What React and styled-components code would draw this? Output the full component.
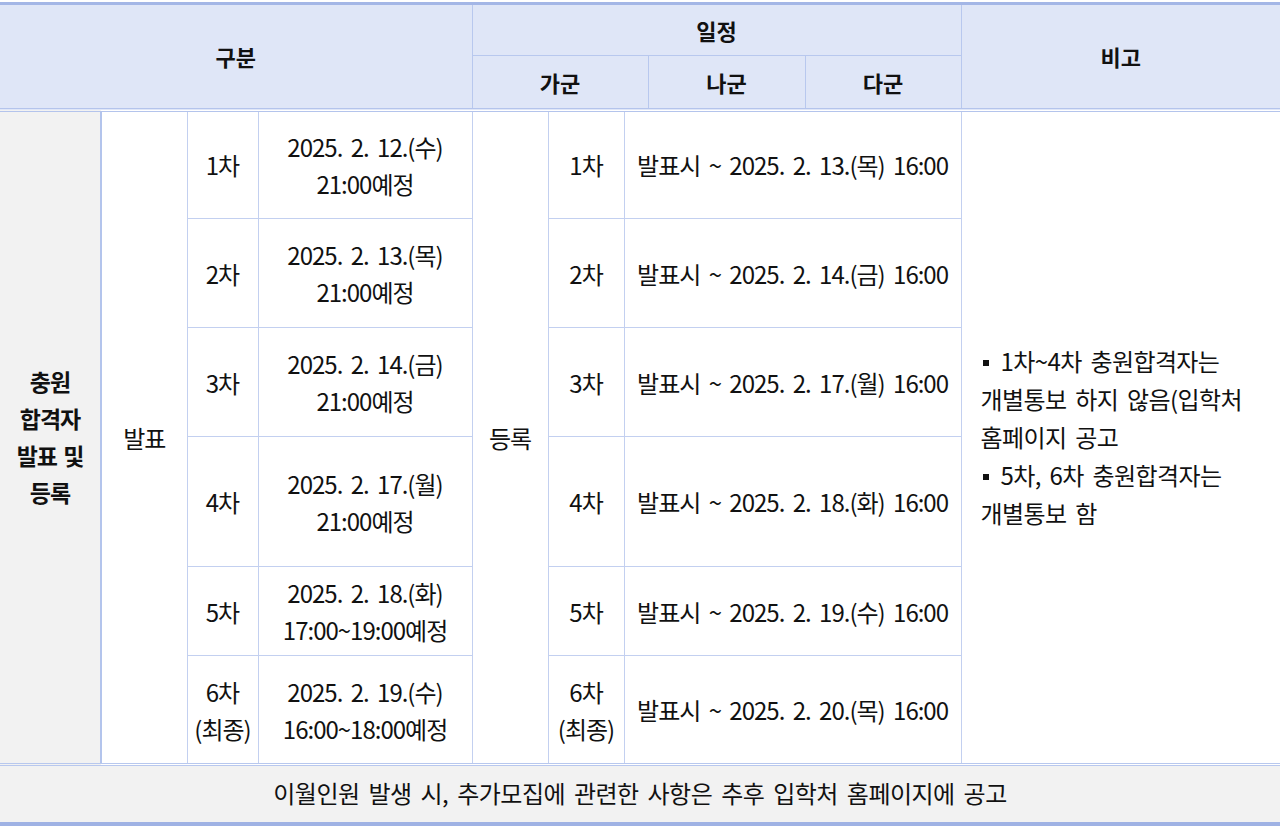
import React from "react";
import styled, { createGlobalStyle } from "styled-components";

const Global = createGlobalStyle`
  html, body { margin: 0; padding: 0; background: #ffffff; }
  body { font-family: "Noto Sans CJK KR", "Noto Sans", sans-serif; color: #111; }
`;

const Wrap = styled.div`
  width: 1280px;
  height: 826px;
  padding-top: 2px;
  box-sizing: border-box;
  overflow: hidden;
`;

const Table = styled.table`
  width: 1280px;
  table-layout: fixed;
  border-collapse: collapse;
  border-top: 3px solid #a3b6e6;
  border-bottom: 4px solid #9fb2e4;
`;

const Th = styled.th`
  background: #dfe6f7;
  font-weight: 700;
  font-size: 22px;
  letter-spacing: 0;
  text-align: center;
  vertical-align: middle;
  padding: 0;
  border-left: 1px solid #b8c8ee;
  border-right: 1px solid #b8c8ee;
  border-top: 1px solid #b8c8ee;
  border-bottom: ${(p) => (p.$last ? "4px double #b4c4ec" : "1px solid #b8c8ee")};
  &:first-child { border-left: none; }
  &:last-child { border-right: none; }
`;

const Td = styled.td`
  background: ${(p) => (p.$gray ? "#f2f2f2" : "#ffffff")};
  font-weight: ${(p) => (p.$bold ? 700 : 400)};
  font-size: ${(p) => (p.$bold ? 23 : 24)}px;
  line-height: ${(p) => (p.$left ? 38 : 37)}px;
  letter-spacing: ${(p) => (p.$left ? "-0.6px" : "-1px")};
  word-spacing: ${(p) => (p.$bold ? "2px" : "4px")};
  word-break: keep-all;
  text-align: ${(p) => (p.$left ? "left" : "center")};
  vertical-align: middle;
  padding: ${(p) => (p.$left ? "0 6px 0 19px" : "0")};
  border: 1px solid #c3d0f0;
  border-right: ${(p) => (p.$thick ? "2px solid #b3c4ec" : "1px solid #c3d0f0")};
  white-space: ${(p) => (p.$nowrap ? "nowrap" : "normal")};
  &:first-child { border-left: none; }
  &:last-child { border-right: none; }
`;

const Bullet = styled.span`
  display: inline-block;
  width: 6px;
  height: 6px;
  background: #111;
  vertical-align: middle;
  margin: -3px 12px 0 2px;
`;

const Foot = styled.td`
  background: #f2f2f2;
  font-size: 24px;
  letter-spacing: -0.5px;
  word-spacing: 4px;
  text-align: center;
  vertical-align: middle;
  padding: 0 0 4px;
  border-top: 3px double #b8c8ee;
  height: 52px;
`;

const Line = styled.div`
  white-space: nowrap;
`;

const Row = styled.tr`
  height: ${(p) => p.$h}px;
`;

const widths = [101, 86, 71, 214, 76, 76, 24, 157, 156, 319];

const rows = [
  { n: "1차", d: "2025. 2. 12.(수)", t: "21:00예정", r: "발표시 ~ 2025. 2. 13.(목) 16:00", h: 109 },
  { n: "2차", d: "2025. 2. 13.(목)", t: "21:00예정", r: "발표시 ~ 2025. 2. 14.(금) 16:00", h: 109 },
  { n: "3차", d: "2025. 2. 14.(금)", t: "21:00예정", r: "발표시 ~ 2025. 2. 17.(월) 16:00", h: 109 },
  { n: "4차", d: "2025. 2. 17.(월)", t: "21:00예정", r: "발표시 ~ 2025. 2. 18.(화) 16:00", h: 130 },
  { n: "5차", d: "2025. 2. 18.(화)", t: "17:00~19:00예정", r: "발표시 ~ 2025. 2. 19.(수) 16:00", h: 89 },
  { n: "6차", sub: "(최종)", d: "2025. 2. 19.(수)", t: "16:00~18:00예정", r: "발표시 ~ 2025. 2. 20.(목) 16:00", h: 109 },
];

export default function App() {
  return (
    <Wrap>
      <Global />
      <Table>
        <colgroup>
          {widths.map((w, i) => (
            <col key={i} style={{ width: w }} />
          ))}
        </colgroup>
        <thead>
          <Row $h={52}>
            <Th colSpan={4} rowSpan={2} $last>구분</Th>
            <Th colSpan={5}>일정</Th>
            <Th rowSpan={2} $last>비고</Th>
          </Row>
          <Row $h={54}>
            <Th colSpan={3} $last>가군</Th>
            <Th $last>나군</Th>
            <Th $last>다군</Th>
          </Row>
        </thead>
        <tbody>
          {rows.map((r, i) => (
            <Row key={i} $h={r.h}>
              {i === 0 && (
                <>
                  <Td rowSpan={6} $gray $bold $thick>
                    <Line>충원</Line>
                    <Line>합격자</Line>
                    <Line>발표 및</Line>
                    <Line>등록</Line>
                  </Td>
                  <Td rowSpan={6}>발표</Td>
                </>
              )}
              <Td>
                <Line>{r.n}</Line>
                {r.sub && <Line>{r.sub}</Line>}
              </Td>
              <Td>
                <Line>{r.d}</Line>
                <Line>{r.t}</Line>
              </Td>
              {i === 0 && <Td rowSpan={6}>등록</Td>}
              <Td>
                <Line>{r.n}</Line>
                {r.sub && <Line>{r.sub}</Line>}
              </Td>
              <Td colSpan={3} $nowrap>{r.r}</Td>
              {i === 0 && (
                <Td rowSpan={6} $left>
                  <div><Bullet />1차~4차 충원합격자는 개별통보 하지 않음(입학처 홈페이지 공고</div>
                  <div><Bullet />5차, 6차 충원합격자는 개별통보 함</div>
                </Td>
              )}
            </Row>
          ))}
          <tr>
            <Foot colSpan={10}>이월인원 발생 시, 추가모집에 관련한 사항은 추후 입학처 홈페이지에 공고</Foot>
          </tr>
        </tbody>
      </Table>
    </Wrap>
  );
}
